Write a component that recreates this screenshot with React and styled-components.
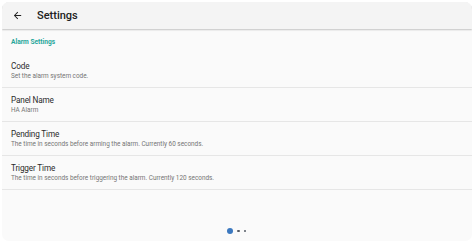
import React from "react";
import styled, { createGlobalStyle } from "styled-components";

const Global = createGlobalStyle`
  html, body { margin: 0; padding: 0; background: #ffffff; }
  body { font-family: Roboto, "Noto Sans", Arial, sans-serif; }
`;

const Frame = styled.div`
  width: 474px;
  height: 244px;
  box-sizing: border-box;
  padding: 2px 2px 3px 2px;
  background: #ffffff;
`;

const Screen = styled.div`
  height: 100%;
  background: #fafafa;
  border-radius: 7px;
  overflow: hidden;
  display: flex;
  flex-direction: column;
`;

const AppBar = styled.div`
  height: 27px;
  flex: none;
  display: flex;
  align-items: center;
  background: #f4f4f4;
  box-shadow: 0 1px 1.5px rgba(0, 0, 0, 0.22);
  position: relative;
  z-index: 1;
`;

const Back = styled.div`
  width: 35px;
  display: flex;
  justify-content: center;
  padding-right: 4px;
  box-sizing: border-box;
`;

const Title = styled.div`
  font-size: 11px;
  font-weight: 500;
  color: #212121;
`;

const Subheader = styled.div`
  height: 24px;
  padding-left: 9px;
  display: flex;
  align-items: center;
  font-size: 6.6px;
  font-weight: 700;
  color: #26a69a;
  margin-top: 1px;
`;

const Row = styled.div`
  height: 33px;
  padding-left: 9px;
  display: flex;
  flex-direction: column;
  justify-content: center;
  border-bottom: 1px solid #e6e6e6;
`;

const RowTitle = styled.div`
  font-size: 8.2px;
  font-weight: 400;
  color: #2b2b2b;
  letter-spacing: -0.15px;
  line-height: 11px;
`;

const RowSub = styled.div`
  font-size: 6.4px;
  color: #757575;
  line-height: 9px;
`;

const Spacer = styled.div`
  flex: 1;
`;

const Dots = styled.div`
  height: 20px;
  display: flex;
  align-items: center;
  justify-content: center;
  gap: 4px;
  padding-right: 1px;
`;

const Dot = styled.div`
  width: ${(p) => (p.$active ? 6 : 2.5)}px;
  height: ${(p) => (p.$active ? 6 : 2.5)}px;
  border-radius: 50%;
  background: ${(p) => (p.$active ? "#3b78bf" : "#555b66")};
`;

const rows = [
  ["Code", "Set the alarm system code."],
  ["Panel Name", "HA Alarm"],
  ["Pending Time", "The time in seconds before arming the alarm. Currently 60 seconds."],
  ["Trigger Time", "The time in seconds before triggering the alarm. Currently 120 seconds."],
];

export default function App() {
  return (
    <>
      <Global />
      <Frame>
        <Screen>
          <AppBar>
            <Back>
              <svg width="11" height="11" viewBox="0 0 24 24">
                <path
                  d="M20 11H7.83l5.59-5.59L12 4l-8 8 8 8 1.41-1.41L7.83 13H20v-2z"
                  fill="#212121"
                />
              </svg>
            </Back>
            <Title>Settings</Title>
          </AppBar>
          <Subheader>Alarm Settings</Subheader>
          {rows.map(([t, s]) => (
            <Row key={t}>
              <RowTitle>{t}</RowTitle>
              <RowSub>{s}</RowSub>
            </Row>
          ))}
          <Spacer />
          <Dots>
            <Dot $active />
            <Dot />
            <Dot />
          </Dots>
        </Screen>
      </Frame>
    </>
  );
}
